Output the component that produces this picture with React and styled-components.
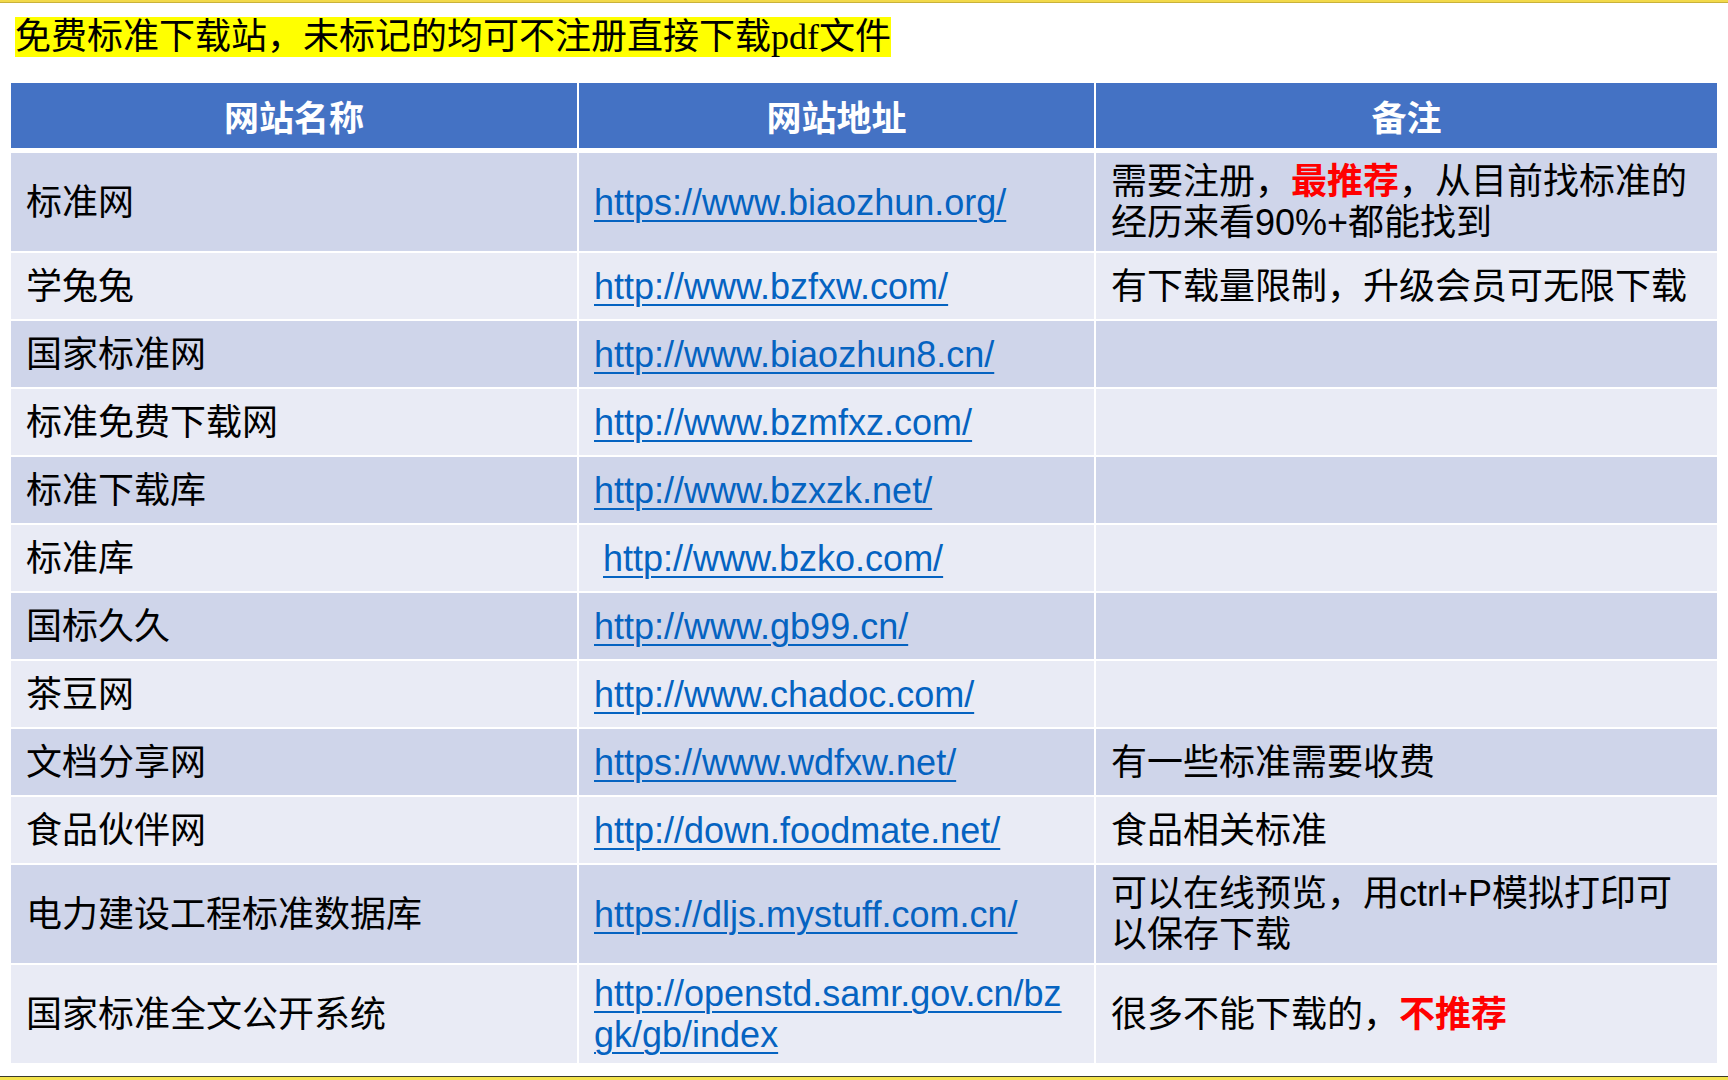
import React from 'react';
import styled, { createGlobalStyle } from 'styled-components';

const GlobalStyle = createGlobalStyle`
  html, body {
    margin: 0;
    padding: 0;
    background: #ffffff;
  }
`;

const Page = styled.div`
  box-sizing: border-box;
  min-height: 1080px;
  display: flex;
  flex-direction: column;
  border-top: 2px solid #f2d94a;
  box-shadow: inset 0 1px 0 #c9b23a;
`;

const Heading = styled.h1`
  margin: 15px 0 0 15px;
  font-family: 'Liberation Serif', 'Noto Sans CJK SC', serif;
  font-weight: 400;
  font-size: 36px;
  line-height: 40px;
`;

const Marker = styled.span`
  background: #ffff00;
  color: #000;
`;

const Table = styled.div`
  margin: 26px 11px 0 11px;
  display: flex;
  flex-direction: column;
  gap: 5px;
  font-family: 'Liberation Sans', 'Noto Sans CJK SC', sans-serif;
  font-size: 36px;
`;

const HeadRow = styled.div`
  display: grid;
  grid-template-columns: 566px 515px 1fr;
  column-gap: 2px;
`;

const HeadCell = styled.div`
  height: 65px;
  display: flex;
  align-items: center;
  justify-content: center;
  background: #4472c4;
  color: #ffffff;
  font-family: 'Noto Sans CJK SC', sans-serif;
  font-weight: 700;
  font-size: 35px;
`;

const Body = styled.div`
  display: flex;
  flex-direction: column;
  gap: 2px;
`;

const Row = styled.div`
  display: grid;
  grid-template-columns: 566px 515px 1fr;
  column-gap: 2px;
`;

const Cell = styled.div`
  box-sizing: border-box;
  min-height: 66px;
  padding: 8px 14px 8px 15px;
  display: flex;
  align-items: center;
  background: ${(p) => (p.$odd ? '#cfd5ea' : '#e9ebf5')};
  color: #000;
  line-height: 41px;
`;

const CellText = styled.div`
  min-width: 0;
`;

const Link = styled.a`
  color: #0563c1;
  text-decoration: underline;
  text-decoration-thickness: 2px;
  text-underline-offset: 5px;
  word-break: break-all;
  margin-left: ${(p) => (p.$indent ? '9px' : '0')};
`;

const Hot = styled.span`
  color: #ff0000;
  font-weight: 700;
`;

const BottomRule = styled.div`
  margin-top: auto;
  height: 3px;
  background: #f2e24a;
  border-top: 1px solid #3a3a2a;
`;

const sites = [
  {
    name: '标准网',
    url: 'https://www.biaozhun.org/',
    note: (
      <>
        需要注册，<Hot>最推荐</Hot>，从目前找标准的经历来看90%+都能找到
      </>
    ),
  },
  { name: '学兔兔', url: 'http://www.bzfxw.com/', note: '有下载量限制，升级会员可无限下载' },
  { name: '国家标准网', url: 'http://www.biaozhun8.cn/' },
  { name: '标准免费下载网', url: 'http://www.bzmfxz.com/' },
  { name: '标准下载库', url: 'http://www.bzxzk.net/' },
  { name: '标准库', url: 'http://www.bzko.com/', indent: true },
  { name: '国标久久', url: 'http://www.gb99.cn/' },
  { name: '茶豆网', url: 'http://www.chadoc.com/' },
  { name: '文档分享网', url: 'https://www.wdfxw.net/', note: '有一些标准需要收费' },
  { name: '食品伙伴网', url: 'http://down.foodmate.net/', note: '食品相关标准' },
  {
    name: '电力建设工程标准数据库',
    url: 'https://dljs.mystuff.com.cn/',
    note: '可以在线预览，用ctrl+P模拟打印可以保存下载',
  },
  {
    name: '国家标准全文公开系统',
    url: 'http://openstd.samr.gov.cn/bzgk/gb/index',
    note: (
      <>
        很多不能下载的，<Hot>不推荐</Hot>
      </>
    ),
  },
];

function App() {
  return (
    <>
      <GlobalStyle />
      <Page>
        <Heading>
          <Marker>免费标准下载站，未标记的均可不注册直接下载pdf文件</Marker>
        </Heading>
        <Table>
          <HeadRow>
            <HeadCell>网站名称</HeadCell>
            <HeadCell>网站地址</HeadCell>
            <HeadCell>备注</HeadCell>
          </HeadRow>
          <Body>
            {sites.map((s, i) => (
              <Row key={s.url}>
                <Cell $odd={i % 2 === 0}>
                  <CellText>{s.name}</CellText>
                </Cell>
                <Cell $odd={i % 2 === 0}>
                  <CellText>
                    <Link href={s.url} $indent={s.indent}>
                      {s.url}
                    </Link>
                  </CellText>
                </Cell>
                <Cell $odd={i % 2 === 0}>
                  <CellText>{s.note}</CellText>
                </Cell>
              </Row>
            ))}
          </Body>
        </Table>
        <BottomRule />
      </Page>
    </>
  );
}

export default App;
